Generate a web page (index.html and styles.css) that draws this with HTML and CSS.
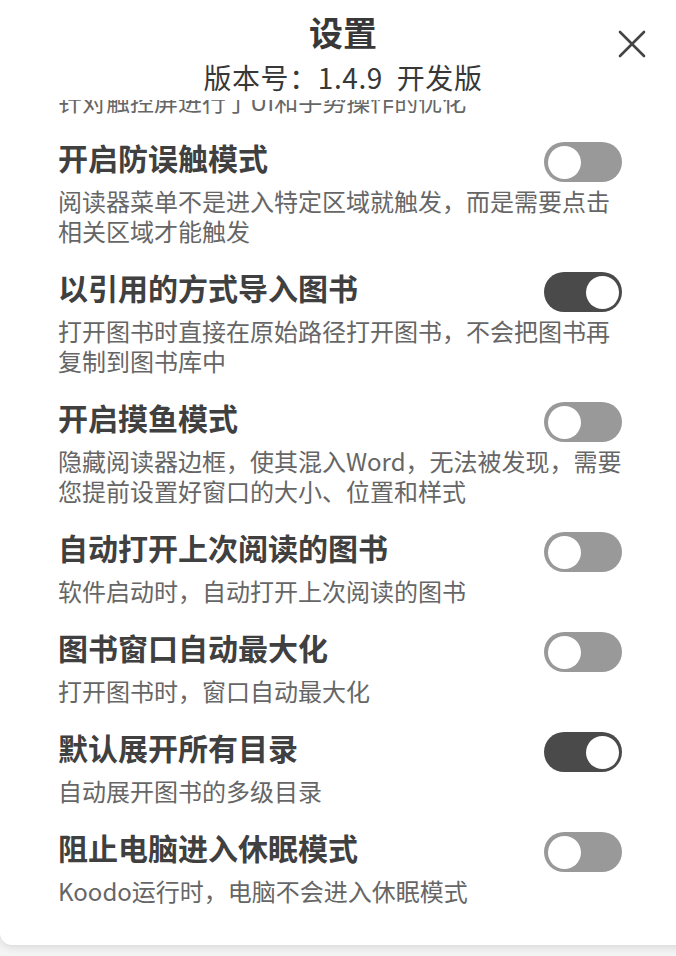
FILE: index.html
```html
<!DOCTYPE html>
<html lang="zh-CN">
<head>
<meta charset="utf-8">
<title>设置</title>
<link rel="stylesheet" href="styles.css">
</head>
<body>
<div class="card">
  <div class="header">
    <div class="title">设置</div>
    <div class="version">版本号：1.4.9&nbsp; 开发版</div>
    <button class="close" aria-label="关闭">
      <svg width="28" height="28" viewBox="0 0 28 28"><path d="M2 2 L26 26 M26 2 L2 26" stroke="#444" stroke-width="2.6" stroke-linecap="round" fill="none"/></svg>
    </button>
  </div>
  <div class="list">
    <div class="list-inner">
      <div class="item partial">
        <div class="desc">针对触控屏进行了UI和手势操作的优化</div>
      </div>
      <div class="item">
        <div class="name">开启防误触模式</div>
        <div class="toggle"><span class="knob"></span></div>
        <div class="desc">阅读器菜单不是进入特定区域就触发，而是需要点击<br>相关区域才能触发</div>
      </div>
      <div class="item">
        <div class="name">以引用的方式导入图书</div>
        <div class="toggle on"><span class="knob"></span></div>
        <div class="desc">打开图书时直接在原始路径打开图书，不会把图书再<br>复制到图书库中</div>
      </div>
      <div class="item">
        <div class="name">开启摸鱼模式</div>
        <div class="toggle"><span class="knob"></span></div>
        <div class="desc">隐藏阅读器边框，使其混入Word，无法被发现，需要<br>您提前设置好窗口的大小、位置和样式</div>
      </div>
      <div class="item">
        <div class="name">自动打开上次阅读的图书</div>
        <div class="toggle"><span class="knob"></span></div>
        <div class="desc">软件启动时，自动打开上次阅读的图书</div>
      </div>
      <div class="item">
        <div class="name">图书窗口自动最大化</div>
        <div class="toggle"><span class="knob"></span></div>
        <div class="desc">打开图书时，窗口自动最大化</div>
      </div>
      <div class="item">
        <div class="name">默认展开所有目录</div>
        <div class="toggle on"><span class="knob"></span></div>
        <div class="desc">自动展开图书的多级目录</div>
      </div>
      <div class="item">
        <div class="name">阻止电脑进入休眠模式</div>
        <div class="toggle"><span class="knob"></span></div>
        <div class="desc">Koodo运行时，电脑不会进入休眠模式</div>
      </div>
    </div>
  </div>
</div>
</body>
</html>
```
FILE: styles.css
```css
* { box-sizing: border-box; }
html, body {
  margin: 0;
  padding: 0;
  width: 676px;
  height: 956px;
  overflow: hidden;
  background: #f4f4f4;
  font-family: "Noto Sans CJK SC", "Noto Sans", sans-serif;
}
.card {
  width: 700px;
  height: 945px;
  background: #fff;
  border-radius: 0 0 12px 12px;
  box-shadow: 0 2px 8px rgba(0,0,0,0.12);
  display: flex;
  flex-direction: column;
  overflow: hidden;
}
.header {
  position: relative;
  width: 676px;
  height: 100px;
  flex: none;
  padding-top: 12px;
  text-align: center;
  background: #fff;
  z-index: 1;
}
.title {
  font-size: 34px;
  line-height: 40px;
  font-weight: 700;
  color: #383838;
  padding-left: 10px;
}
.version {
  margin-top: 7px;
  font-size: 28px;
  line-height: 36px;
  letter-spacing: 0.6px;
  color: #383838;
  padding-left: 10px;
}
.close {
  position: absolute;
  left: 618px;
  top: 30px;
  width: 28px;
  height: 28px;
  padding: 0;
  border: 0;
  background: transparent;
}
.close svg { display: block; }
.list {
  flex: 1;
  width: 676px;
  overflow: hidden;
}
.list-inner {
  margin-top: -14px;
}
.item {
  display: grid;
  grid-template-columns: 1fr auto;
  padding: 0 54px 0 58px;
  margin-bottom: 21px;
}
.name {
  font-size: 30px;
  line-height: 40px;
  font-weight: 700;
  color: #404040;
  margin-bottom: 9px;
}
.desc {
  grid-column: 1 / 3;
  font-size: 24px;
  line-height: 30px;
  color: #666;
  white-space: nowrap;
}
.toggle {
  margin-top: 5px;
  width: 78px;
  height: 40px;
  border-radius: 20px;
  background: #999;
  padding: 3.5px;
  display: flex;
  justify-content: flex-start;
}
.toggle.on {
  background: #4a4a4a;
  justify-content: flex-end;
}
.knob {
  width: 33px;
  height: 33px;
  border-radius: 50%;
  background: #fff;
}
```
